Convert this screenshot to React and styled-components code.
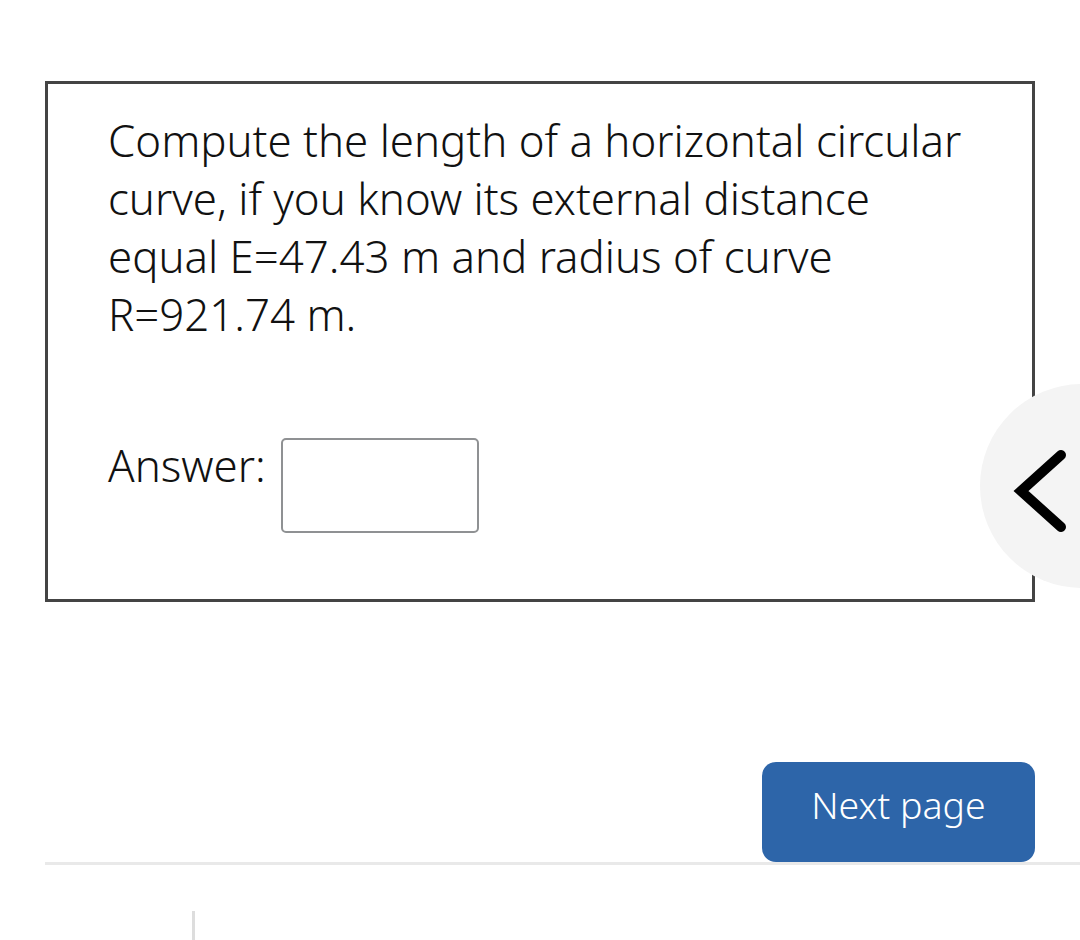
import React from 'react'
import styled, { createGlobalStyle } from "styled-components";

const GlobalStyle = createGlobalStyle`
    body {
        margin: 0;
        background: #ffffff;
        font-family: "Noto Sans", "Open Sans", sans-serif;
        color: #111111;
    }
`;

const Page = styled.div`
    position: relative;
    width: 1080px;
    height: 940px;
    overflow: hidden;
    padding: 81px 0 0 45px;
    box-sizing: border-box;
`;

const QuestionBox = styled.div`
    width: 990px;
    height: 521px;
    box-sizing: border-box;
    border: 3px solid #444444;
    padding: 27px 60px 0 60px;
`;

const QuestionText = styled.p`
    margin: 0;
    font-size: 43.8px;
    font-weight: 300;
    line-height: 58px;
    color: #111111;
`;

const AnswerRow = styled.div`
    display: flex;
    align-items: flex-start;
    gap: 15px;
    margin-top: 95px;
`;

const AnswerLabel = styled.label`
    font-size: 43.8px;
    font-weight: 300;
    line-height: 58px;
    margin-top: -2px;
`;

const AnswerInput = styled.input`
    width: 198px;
    height: 95px;
    box-sizing: border-box;
    border: 2px solid #8f9193;
    border-radius: 5px;
    background: #ffffff;
    outline: none;
    font-size: 32px;
    padding: 0 12px;
`;

const SideTab = styled.button`
    position: absolute;
    left: 980px;
    top: 384px;
    width: 204px;
    height: 204px;
    border-radius: 50%;
    border: none;
    background: #f4f4f4;
    padding: 0 0 0 30px;
    display: flex;
    align-items: center;
    cursor: pointer;
`;

const Footer = styled.div`
    display: flex;
    justify-content: flex-end;
    width: 990px;
    margin-top: 160px;
`;

const NextButton = styled.a`
    display: flex;
    align-items: center;
    justify-content: center;
    width: 273px;
    height: 100px;
    border-radius: 14px;
    background-color: #2d65a9;
    color: #ffffff;
    font-size: 37.5px;
    font-weight: 300;
    text-decoration: none;
    cursor: pointer;
    padding-bottom: 16px;
    box-sizing: border-box;
`;

const Divider = styled.hr`
    margin: 0;
    border: none;
    border-top: 3px solid #e9e9e9;
    width: 1035px;
`;

const Caret = styled.div`
    width: 3px;
    height: 30px;
    background: #dddddd;
    margin: 46px 0 0 147px;
`;

const App = () => {
    return (
        <Page>
            <GlobalStyle />
            <QuestionBox>
                <QuestionText>
                    Compute the length of a horizontal circular curve, if you know its external distance
                    <br />equal E=47.43 m and radius of curve<br />R=921.74 m.
                </QuestionText>
                <AnswerRow>
                    <AnswerLabel>Answer:</AnswerLabel>
                    <AnswerInput type="text" />
                </AnswerRow>
            </QuestionBox>
            <SideTab aria-label="Open navigation">
                <svg width="58" height="96" viewBox="0 0 58 96">
                    <polyline points="51,17 11,53 51,89" fill="none" stroke="#000" strokeWidth="10" strokeLinecap="round" strokeLinejoin="miter" />
                </svg>
            </SideTab>
            <Footer>
                <NextButton href="#">Next page</NextButton>
            </Footer>
            <Divider />
            <Caret />
        </Page>
    )
}

export default App
